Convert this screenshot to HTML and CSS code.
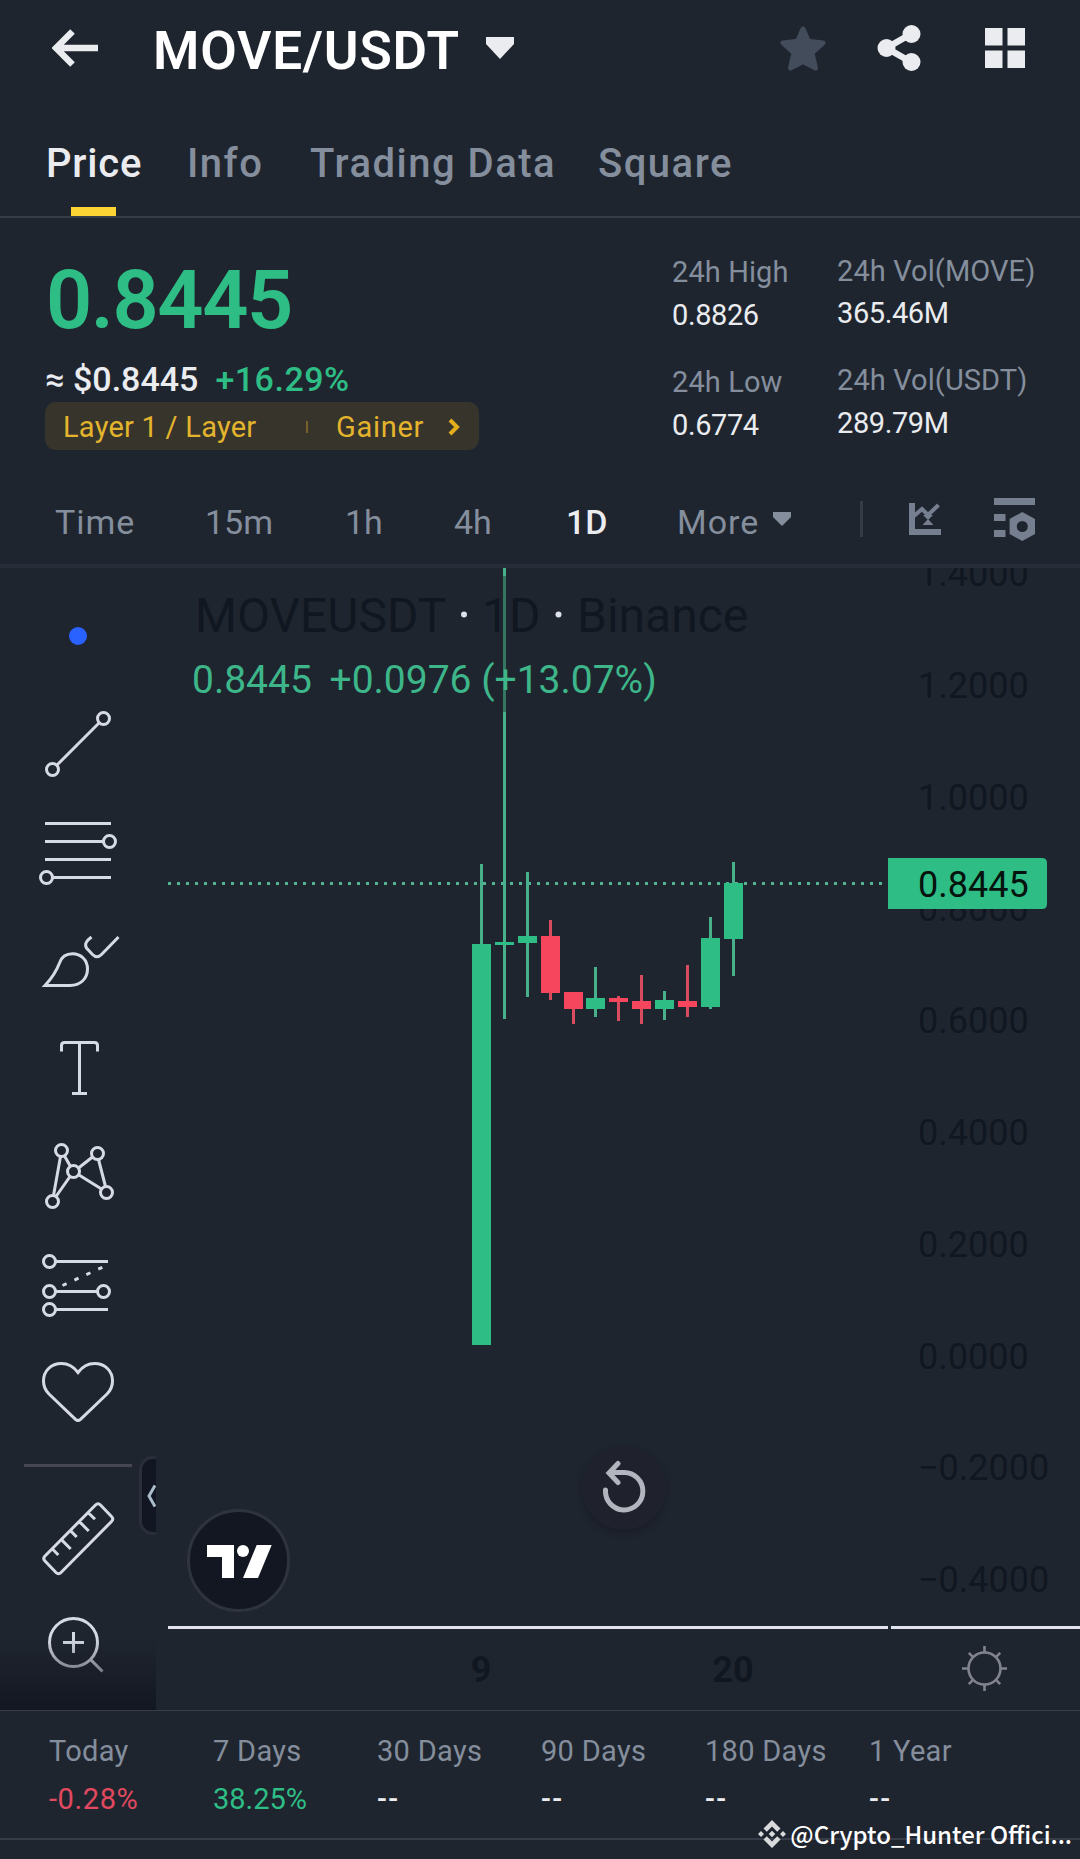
FILE: index.html
```html
<!DOCTYPE html>
<html lang="en">
<head>
<meta charset="utf-8">
<title>MOVE/USDT</title>
<link rel="stylesheet" href="styles.css">
</head>
<body>
<div class="app">
  <header class="topbar">
    <svg class="back" width="46" height="38" viewBox="0 0 46 38"><path d="M3 19H46M20.500 2.500L4 19L20.500 35.500" fill="none" stroke="#eaecef" stroke-width="6.500"/></svg>
    <h1 class="pair">MOVE/USDT</h1>
    <svg class="pair-caret" width="28" height="22" viewBox="0 0 28 22"><path d="M0 0H28V7L14 22L0 7Z" fill="#eaecef"/></svg>
    <div class="actions">
      <svg width="46" height="46" viewBox="0 0 46 46"><path d="M23 4L28.300 16.200L43 18L32 28L35.500 43L23 36.500L10.500 43L14 28L3 18L17.700 16.200Z" fill="#434c5a" stroke="#434c5a" stroke-width="5" stroke-linejoin="round"/></svg>
      <svg width="44" height="46" viewBox="0 0 44 46"><path d="M34 9L9.500 23L34 37" fill="none" stroke="#eaecef" stroke-width="6.500"/><g fill="#eaecef"><circle cx="34.500" cy="9" r="9"/><circle cx="9.500" cy="23" r="9"/><circle cx="34.500" cy="37" r="9"/></g></svg>
      <svg width="40" height="40" viewBox="0 0 40 40"><path d="M0 0H17.500V17.500H0ZM22.500 0H40V17.500H22.500ZM0 22.500H17.500V40H0ZM22.500 22.500H40V40H22.500Z" fill="#eaecef"/></svg>
    </div>
  </header>

  <nav class="tabs">
    <span class="tab active">Price</span>
    <span class="tab">Info</span>
    <span class="tab">Trading Data</span>
    <span class="tab">Square</span>
  </nav>

  <section class="quote">
    <div class="last">
      <div class="last-price">0.8445</div>
      <div class="fiat"><span class="approx">≈</span><span>$0.8445</span><span class="up pct">+16.29%</span></div>
      <div class="tags">
        <span class="tag-a">Layer 1 / Layer</span>
        <span class="tag-sep"></span>
        <span class="tag-b">Gainer</span>
        <svg width="12" height="18" viewBox="0 0 12 18"><path d="M2 2L9 9L2 16" fill="none" stroke="#e3ad1c" stroke-width="4"/></svg>
      </div>
    </div>
    <dl class="stats stats-range">
      <div><dt>24h High</dt><dd>0.8826</dd></div>
      <div><dt>24h Low</dt><dd>0.6774</dd></div>
    </dl>
    <dl class="stats stats-vol">
      <div><dt>24h Vol(MOVE)</dt><dd>365.46M</dd></div>
      <div><dt>24h Vol(USDT)</dt><dd>289.79M</dd></div>
    </dl>
  </section>

  <nav class="intervals">
    <span class="wide">Time</span><span>15m</span><span>1h</span><span>4h</span><span class="active">1D</span>
    <span class="more wide">More<svg width="18" height="14" viewBox="0 0 18 14"><path d="M0 0H18V5L9 14L0 5Z" fill="#848e9c"/></svg></span>
    <i class="sep"></i>
    <svg class="ico-line" width="32" height="32" viewBox="0 0 32 32"><path d="M3 0V29H32" fill="none" stroke="#767f8f" stroke-width="6"/><path d="M5 13L13 6L19 12L29.500 2" fill="none" stroke="#767f8f" stroke-width="4"/><path d="M19 16L24.500 22H13.500ZM14 12H24L19 17Z" fill="#767f8f"/></svg>
    <svg class="ico-set" width="41" height="43" viewBox="0 0 41 43"><path d="M0 0H41V7H0ZM0 16H11.500V23H0ZM0 32H11.500V39H0Z" fill="#767f8f"/><path fill-rule="evenodd" d="M28.300 14L41 21V36L28.300 43L15.600 36V21ZM28.300 23A5.500 5.500 0 1 0 28.300 34A5.500 5.500 0 1 0 28.300 23Z" fill="#767f8f"/></svg>
  </nav>

  <main class="chart">
    <aside class="tools">
      <svg class="tool" viewBox="0 582 156 108"><circle cx="78" cy="636" r="9" fill="#2962ff" stroke="none"/></svg>
      <svg class="tool" viewBox="0 690 156 108"><path d="M57 765L99 723"/><circle cx="103.500" cy="718.500" r="6"/><circle cx="52.500" cy="769.500" r="6"/></svg>
      <svg class="tool" viewBox="0 798 156 108"><path d="M45 823.500H111M45 841.500H103M45 859.500H111M53 877.500H111"/><circle cx="109.500" cy="841.500" r="6"/><circle cx="46.500" cy="877.500" r="6"/></svg>
      <svg class="tool" viewBox="0 906 156 108"><path d="M45 985.500C52 978 56.500 971 59.500 963C61.500 957 66 953.800 72.500 953.800C81 953.800 87.500 960 87.500 969C87.500 979 80 985.500 70 985.500Z"/><path d="M91.500 937C87 940.500 84 943.500 86.500 948L92.500 954.500C95.500 957.500 98.500 957.500 101.500 954.500L118.500 937"/></svg>
      <svg class="tool" viewBox="0 1014 156 108"><path d="M61.500 1051.500V1045.500Q61.500 1042.500 64.500 1042.500H94.500Q97.500 1042.500 97.500 1045.500V1051.500M79.500 1042.500V1093.500M72 1093.500H87"/></svg>
      <svg class="tool" viewBox="0 1122 156 108"><path d="M60.500 1156.500L53.500 1195.500M64.500 1156L70.500 1166.500M70 1176.500L56 1196.500M78.500 1168L92.500 1157M79 1175L101.500 1189M98.500 1159.500L105.500 1186.500"/><circle cx="61.500" cy="1150.500" r="6"/><circle cx="97.500" cy="1153.500" r="6"/><circle cx="73.500" cy="1171.500" r="6"/><circle cx="106.500" cy="1192.500" r="6"/><circle cx="52.500" cy="1201.500" r="6"/></svg>
      <svg class="tool" viewBox="0 1230 156 108"><path d="M56 1261.500H108M56 1291.500H97M56 1309.500H108"/><path d="M62.500 1285.500L103 1267" stroke-dasharray="4.500 8.600"/><circle cx="49.500" cy="1261.500" r="6"/><circle cx="49.500" cy="1291.500" r="6"/><circle cx="103.500" cy="1291.500" r="6"/><circle cx="49.500" cy="1309.500" r="6"/></svg>
      <svg class="tool" viewBox="0 1338 156 108"><path d="M78 1372.500C73.500 1366.500 68 1363.500 61.500 1363.500C51 1363.500 43.500 1371 43.500 1381C43.500 1386.500 45.500 1390.500 49 1394L75.500 1419.300Q78 1421.500 80.500 1419.300L107 1394C110.500 1390.500 112.500 1386.500 112.500 1381C112.500 1371 105 1363.500 94.500 1363.500C88 1363.500 82.500 1366.500 78 1372.500Z" stroke-linejoin="miter"/></svg>
      <div class="tool-divider"></div>
      <svg class="tool" viewBox="0 1484 156 108"><path d="M95.500 1505L45 1556Q42.500 1558.500 45 1561L56 1572.500Q58.500 1575 61 1572.500L111.500 1521.500Q114 1519 111.500 1516.500L100.500 1505Q98 1502.500 95.500 1505ZM88.300 1512.700L95 1519.300M79.400 1521.600L88.700 1531M70.400 1530.600L76.700 1537M61.400 1539.600L70.700 1549M52.200 1548.800L58.300 1555"/></svg>
      <svg class="tool" viewBox="0 1592 156 108"><circle cx="73.500" cy="1642.500" r="24"/><path d="M63 1642.500H84M73.500 1632V1653M91 1660L102.500 1671.500"/></svg>
      <div class="fade"></div>
      <div class="handle"><svg width="9" height="24" viewBox="0 0 9 24"><path d="M8 1.500L2 12L8 22.500" fill="none" stroke="#a9bcc8" stroke-width="3"/></svg></div>
    </aside>

    <div class="plot">
      <svg class="canvas" width="924" height="1142" viewBox="156 568 924 1142">
        <g class="axis">
          <text x="918" y="586">1.4000</text>
          <text x="918" y="698">1.2000</text>
          <text x="918" y="810">1.0000</text>
          <text x="918" y="921">0.8000</text>
          <text x="918" y="1033">0.6000</text>
          <text x="918" y="1145">0.4000</text>
          <text x="918" y="1257">0.2000</text>
          <text x="918" y="1369">0.0000</text>
          <text x="918" y="1480">−0.2000</text>
          <text x="918" y="1592">−0.4000</text>
        </g>
        <g class="axis dates">
          <text x="481" y="1682">9</text>
          <text x="733" y="1682">20</text>
        </g>
        <g class="legend-name">
          <text x="195" y="632">MOVEUSDT</text>
          <text x="482" y="632">1D</text>
          <text x="577" y="632">Binance</text>
        </g>
        <circle cx="464" cy="614.500" r="3" fill="#dfe2ea"/>
        <circle cx="558.500" cy="614.500" r="3" fill="#dfe2ea"/>

        <path d="M168 883.500H884" stroke="#55b292" stroke-width="3" stroke-dasharray="3 6"/>

        <g fill="#48b18b">
          <path d="M480 864h3v80h-3zM526 872h3v125h-3zM594 967h3v50h-3zM663 991h3v29h-3zM709 917h3v92h-3zM732 862h3v114h-3z"/>
          <path d="M503 568h3v8h-3zM503 712h3v307h-3z"/>
          <path d="M503 576h3v136h-3z" fill="#34765f"/>
        </g>
        <g fill="#d94c60">
          <path d="M549 920h3v80h-3zM572 992h3v32h-3zM617 996h3v25h-3zM640 975h3v49h-3zM686 965h3v52h-3z"/>
        </g>
        <g fill="#2ebd85">
          <path d="M472 944h19v401h-19zM495 942h19v3h-19zM518 936h19v7h-19zM586 998h19v11h-19zM655 1000h19v9h-19zM701 938h19v69h-19zM724 883h19v56h-19z"/>
        </g>
        <g fill="#f6465d">
          <path d="M541 936h19v57h-19zM564 992h19v17h-19zM609 998h19v4h-19zM632 1001h19v8h-19zM678 1001h19v6h-19z"/>
        </g>

        <g class="legend-val">
          <text x="192" y="693">0.8445</text>
          <text x="329.500" y="693">+0.0976 (+13.07%)</text>
        </g>

        <path d="M888 858H1042Q1047 858 1047 863V904Q1047 909 1042 909H888Z" fill="#2ebd85"/>
        <text class="mark" x="918" y="896.500">0.8445</text>

        <path d="M168 1626h720v3h-720zM891 1626h189v3h-189z" fill="#e0e3eb"/>

        <g fill="none" stroke="#80838d" stroke-width="2.600">
          <circle cx="984.500" cy="1668.500" r="16"/>
          <path d="M984.500 1652v-6M984.500 1685v6M968 1668.500h-6M1001 1668.500h6M972.800 1656.800l-4-4M996.200 1656.800l4-4M972.800 1680.200l-4 4M996.200 1680.200l4 4"/>
        </g>
      </svg>
      <div class="tv"><svg width="66" height="34" viewBox="207 1545 66 34"><path d="M207 1545h27v33h-12v-21h-15zM256.700 1545h15l-13.700 33h-15z" fill="#fff"/><circle cx="243" cy="1551" r="6" fill="#fff"/></svg></div>
      <div class="reset"><svg width="48" height="56" viewBox="600 1460 48 56"><path d="M605.500 1490A18.700 18.700 0 1 0 624 1472.500H611M618 1463.500L609 1473L618 1482.500" fill="none" stroke="#b2b5be" stroke-width="5" stroke-linecap="round" stroke-linejoin="miter"/></svg></div>
    </div>
  </main>

  <section class="perf">
    <div><span>Today</span><b class="down">-0.28%</b></div>
    <div><span>7 Days</span><b class="up">38.25%</b></div>
    <div><span>30 Days</span><b class="none">--</b></div>
    <div><span>90 Days</span><b class="none">--</b></div>
    <div><span>180 Days</span><b class="none">--</b></div>
    <div><span>1 Year</span><b class="none">--</b></div>
  </section>

  <div class="credit">
    <svg width="28" height="28" viewBox="0 0 28 28"><g fill="#d9dadc"><path d="M14 0L22.500 8.500L19.200 11.800L14 6.600L8.800 11.800L5.500 8.500ZM14 28L22.500 19.500L19.200 16.200L14 21.400L8.800 16.200L5.500 19.500ZM14 10.700L17.300 14L14 17.300L10.700 14ZM3 11L6 14L3 17L0 14ZM25 11L28 14L25 17L22 14Z"/></g></svg>
    <span>@Crypto_Hunter Offici...</span>
  </div>
</div>
</body>
</html>
```
FILE: styles.css
```css
* { box-sizing: border-box; }

body {
  margin: 0;
  background: #1f252f;
  color: #eaecef;
  font-family: Roboto, "Liberation Sans", sans-serif;
}

svg { display: block; flex: none; }

.app {
  position: relative;
  width: 1080px;
  height: 1859px;
  overflow: hidden;
}

.up { color: #2ebd85; }
.down { color: #e0495f; }

/* top bar */
.topbar {
  display: flex;
  align-items: center;
  height: 96px;
  padding: 0 55px 0 52px;
}
.pair {
  margin: 6px 0 0 55px;
  width: 333px;
  font-size: 53px;
  font-weight: 600;
  line-height: 60px;
  color: #fff;
  letter-spacing: .8px;
}
.actions {
  display: flex;
  align-items: center;
  margin-left: auto;
}
.actions svg:nth-child(2) { margin-left: 51px; }
.actions svg:nth-child(3) { margin-left: 64px; }

/* section tabs */
.tabs {
  display: grid;
  grid-template-columns: 141px 123px 288px auto;
  height: 122px;
  padding-left: 46px;
  border-bottom: 2px solid #363d49;
}
.tab {
  position: relative;
  padding-top: 15px;
  font-size: 40px;
  font-weight: 500;
  line-height: 105px;
  color: #848e9c;
  letter-spacing: 1.5px;
}
.tab.active { color: #eaecef; letter-spacing: .8px; }
.tab.active::after {
  content: "";
  position: absolute;
  left: 25px;
  bottom: 0;
  width: 45px;
  height: 9px;
  background: #fcd535;
}

/* quote */
.quote {
  display: grid;
  grid-template-columns: 627px 165px auto;
  height: 260px;
  padding: 35px 0 0 45px;
}
.last { padding-top: 3px; }
.last-price {
  padding-left: 1px;
  font-size: 81px;
  font-weight: 600;
  line-height: 90px;
  letter-spacing: -1.4px;
  color: #2ebd85;
}
.fiat {
  display: flex;
  margin-top: 13px;
  font-size: 34px;
  font-weight: 500;
  line-height: 40px;
}
.approx { width: 28px; }
.pct { margin-left: 17px; letter-spacing: .5px; }
.tags {
  display: flex;
  align-items: center;
  width: 434px;
  height: 48px;
  margin-top: 3px;
  padding: 1px 18px 0 18px;
  border-radius: 11px;
  background: #37342c;
  color: #e3b42c;
  font-size: 29px;
}
.tag-a { width: 243px; letter-spacing: .25px; }
.tag-sep { width: 2px; height: 12px; background: #77602a; }
.tag-b { width: 112px; margin-left: 28px; letter-spacing: .7px; }
.stats { display: grid; align-content: start; margin: 0; font-size: 29px; line-height: 36px; }
.stats-range { padding-top: 1px; }
.stats div { height: 110px; }
.stats-vol div { height: 109px; }
.stats dt { color: #848e9c; letter-spacing: .1px; }
.stats dd { margin: 7px 0 0; letter-spacing: -.4px; }
.stats-vol div:first-child dd { margin-top: 6px; }

/* interval picker */
.intervals {
  display: grid;
  grid-template-columns: 150px 140px 109px 112px 111px 183px 49px 85px auto;
  align-items: center;
  height: 90px;
  padding-left: 55px;
  border-bottom: 4px solid #262d38;
  font-size: 34px;
  color: #848e9c;
}
.intervals span { padding-top: 1px; }
.intervals .wide { letter-spacing: 1px; }
.intervals .active { color: #eaecef; font-weight: 500; }
.more { display: flex; align-items: center; gap: 14px; }
.more svg { margin-bottom: 5px; }
.sep { width: 3px; height: 36px; margin-bottom: 4px; background: #333b47; }
.ico-line { margin-bottom: 5px; }
.ico-set { margin-bottom: 3px; }

/* chart */
.chart { display: flex; height: 1142px; }
.tools {
  position: relative;
  display: flex;
  flex-direction: column;
  width: 156px;
  padding-top: 14px;
}
.tool {
  width: 156px;
  height: 108px;
  fill: none;
  stroke: #d6dae4;
  stroke-width: 3;
}
.tool-divider {
  height: 3px;
  margin: 18px 24px 17px;
  background: #454651;
}
.fade {
  position: absolute;
  left: 0;
  right: 0;
  bottom: 0;
  height: 72px;
  background: linear-gradient(rgba(19, 23, 34, 0), #131722);
}
.handle {
  position: absolute;
  right: 0;
  top: 888px;
  display: flex;
  align-items: center;
  justify-content: flex-end;
  width: 17px;
  height: 79px;
  border: 3px solid #292e3a;
  border-right: 0;
  border-radius: 14px 0 0 14px;
  background: #121622;
}
.plot { position: relative; width: 924px; }
.axis { font-size: 36px; fill: #111720; }
.dates { font-weight: 700; text-anchor: middle; }
.legend-name { font-size: 48px; fill: #111720; }
.legend-val { font-size: 39px; fill: #3db68a; }
.mark { font-size: 36px; fill: #06120d; }
.tv, .reset {
  position: absolute;
  display: flex;
  align-items: center;
  justify-content: center;
  border-radius: 50%;
}
.tv {
  left: 31px;
  top: 941px;
  width: 103px;
  height: 103px;
  padding: 3px 0 0 2px;
  border: 3px solid #2f333e;
  background: #131722;
}
.reset {
  left: 426px;
  top: 878px;
  width: 84px;
  height: 84px;
  background: #1f222d;
  box-shadow: 0 3px 6px rgba(15, 17, 26, .45);
}

/* performance */
.perf {
  display: grid;
  grid-template-columns: repeat(6, 164px);
  height: 130px;
  padding: 22px 0 0 49px;
  border-top: 1px solid #363d48;
  border-bottom: 2px solid #363d48;
  font-size: 29px;
  line-height: 36px;
}
.perf span { display: block; color: #848e9c; letter-spacing: .3px; }
.perf b { display: block; margin-top: 12px; font-weight: 400; }
.perf .down { letter-spacing: .6px; }
.perf .none { font-weight: 500; letter-spacing: 1.5px; }

.credit {
  position: absolute;
  right: 8px;
  top: 1819px;
  display: flex;
  align-items: center;
  gap: 4px;
  height: 30px;
  color: #fff;
  font: 500 24px/30px "Noto Sans CJK SC", "Noto Sans", sans-serif;
  white-space: nowrap;
}
```
